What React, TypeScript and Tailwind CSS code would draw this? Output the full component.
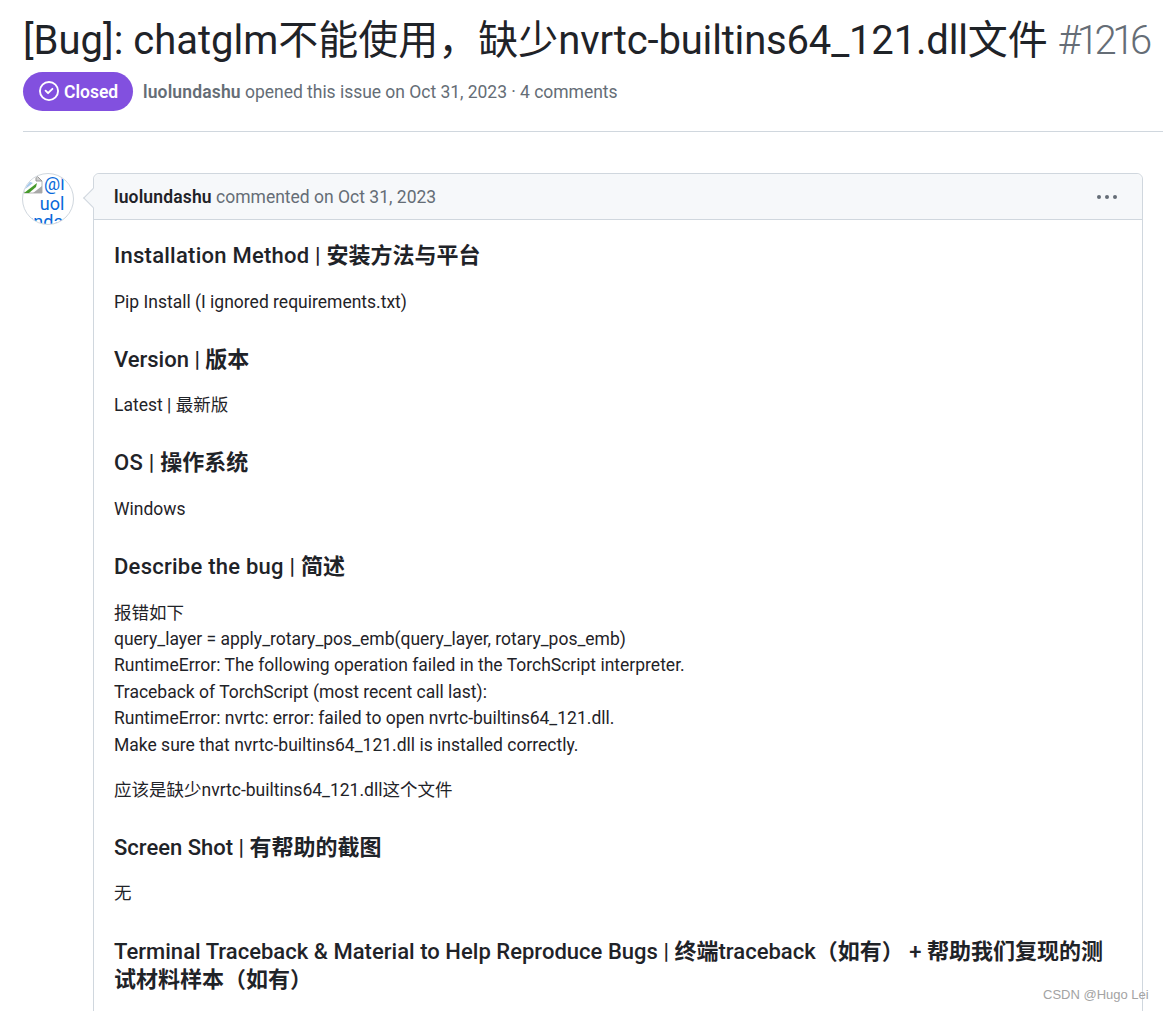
import React from "react";

const CJK = "font-['Roboto','Noto_Sans_CJK_SC',sans-serif]";

function H({ children, className = "tracking-[0.25px]" }: { children: React.ReactNode; className?: string }) {
  return <h3 className={`m-0 text-[22px] leading-[28px] font-medium text-[#1f2328] ${className}`}>{children}</h3>;
}
function Z({ children }: { children: React.ReactNode }) {
  return <span className="font-bold tracking-normal">{children}</span>;
}
function P({ children, className = "" }: { children: React.ReactNode; className?: string }) {
  return <p className={`m-0 text-[17.5px] leading-[26.4px] text-[#1f2328] ${className}`}>{children}</p>;
}

export default function App() {
  return (
    <div className={`relative w-[1163px] h-[1011px] overflow-hidden bg-white ${CJK}`}>
      <div className="pl-[23px]">
        <h1 className="m-0 pt-[16px] h-[72px] text-[40px] leading-[50px] font-normal text-[#1f2328] whitespace-nowrap">
          [Bug]: chatglm不能使用，缺少<span className="tracking-[-0.17px]">nvrtc-builtins64_121.dll</span>文件{" "}
          <span className="text-[#656d76] font-light tracking-[-4.4px]">#1216</span>
        </h1>
        <div className="flex items-center h-[39px]">
          <span className="flex items-center h-[39px] w-[110px] rounded-[20px] bg-[#8250df] pl-[16px] text-white text-[17.5px] font-semibold">
            <svg width="20" height="20" viewBox="0 0 16 16" fill="currentColor" className="mr-[5px] -mt-[2px]">
              <path d="M11.28 6.78a.75.75 0 0 0-1.06-1.06L7.25 8.69 5.78 7.22a.75.75 0 0 0-1.06 1.06l2 2a.75.75 0 0 0 1.06 0l3.5-3.5Z" />
              <path d="M16 8A8 8 0 1 1 0 8a8 8 0 0 1 16 0Zm-1.5 0a6.5 6.5 0 1 0-13 0 6.5 6.5 0 0 0 13 0Z" />
            </svg>
            <span className="pt-[1px]">Closed</span>
          </span>
          <span className="ml-[10px] pt-[1px] text-[17.5px] text-[#656d76] tracking-[-0.03px]">
            <span className="font-semibold tracking-[0.15px]">luolundashu</span> opened this issue on Oct 31, 2023 · 4 comments
          </span>
        </div>
        <div className="mt-[20px] h-px bg-[#d0d7de]" />
        <div className="flex mt-[41px]">
          <div className="w-[52px] h-[52px] -ml-px shrink-0 rounded-full border border-[#d0d7de] overflow-hidden relative text-center text-[#0969da] text-[18px] leading-[20px]">
            <svg width="20" height="20" viewBox="0 0 20 20" className="absolute left-[0px] top-[0px]">
              <path d="M1 1h12l6 6v12H1z" fill="#fff" stroke="#b4b4b4" />
              <path d="M13 1v6h6z" fill="#cfcfcf" stroke="#999999" />
              <path d="M1 11l4-4 5 2-9 7z" fill="#a9c9ea" />
              <path d="M1 19 14 9l-1 4-7 6z" fill="#469a2c" />
              <path d="M10 19l9-7v7z" fill="#a8a8a8" />
            </svg>
            <div className="pl-[21px] text-left">@l</div>
            <div className="pl-[8px]">uol</div>
            <div className="whitespace-nowrap -mt-[2px]">undas</div>
          </div>
          <div className="ml-[19px] w-[1050px] border border-[#d0d7de] rounded-t-[6px] relative">
            <div className="absolute left-[-8px] top-[17px] w-[14px] h-[14px] rotate-45 bg-[#f6f8fa] border-l border-b border-[#d0d7de]" />
            <div className="relative flex items-center justify-between h-[46px] bg-[#f6f8fa] border-b border-[#d0d7de] rounded-t-[6px] pl-[20px] pr-[24px] text-[17.5px] text-[#656d76]">
              <span className="pt-[2px]">
                <span className="font-semibold text-[#1f2328] tracking-[0.15px]">luolundashu</span> commented on Oct 31, 2023
              </span>
              <svg width="22" height="6" viewBox="0 0 22 6" fill="#656d76">
                <circle cx="3" cy="3" r="2" />
                <circle cx="11" cy="3" r="2" />
                <circle cx="19" cy="3" r="2" />
              </svg>
            </div>
            <div className="pl-[20px] pr-[24px] pt-[22px] pb-[60px]">
              <H>Installation Method | <Z>安装方法与平台</Z></H>
              <P className="mt-[19px]">Pip Install (I ignored requirements.txt)</P>
              <H className="mt-[30.3px] tracking-normal">Version | <Z>版本</Z></H>
              <P className="mt-[18.6px]">Latest | 最新版</P>
              <H className="mt-[30.6px] tracking-[0.25px]">OS | <Z>操作系统</Z></H>
              <P className="mt-[19px]">Windows</P>
              <H className="mt-[30.3px] tracking-[0.25px]">Describe the bug | <Z>简述</Z></H>
              <P className="mt-[18.6px]">
                报错如下<br />
                query_layer = apply_rotary_pos_emb(query_layer, rotary_pos_emb)<br />
                RuntimeError: The following operation failed in the TorchScript interpreter.<br />
                Traceback of TorchScript (most recent call last):<br />
                RuntimeError: nvrtc: error: failed to open nvrtc-builtins64_121.dll.<br />
                Make sure that nvrtc-builtins64_121.dll is installed correctly.
              </P>
              <P className="mt-[18.6px]">应该是缺少nvrtc-builtins64_121.dll这个文件</P>
              <H className="mt-[31.4px] tracking-normal">Screen Shot | <Z>有帮助的截图</Z></H>
              <P className="mt-[18px]">无</P>
              <H className="mt-[31px] tracking-[0.03px]">Terminal Traceback &amp; Material to Help Reproduce Bugs | <Z>终端</Z>traceback<Z>（如有）</Z> + <Z>帮助我们复现的测试材料样本（如有）</Z></H>
            </div>
          </div>
        </div>
      </div>
      <div className="absolute left-[1043px] top-[986px] text-[13px] leading-[17px] text-[#a3a3a3] font-['Liberation_Sans',sans-serif]">CSDN @Hugo Lei</div>
    </div>
  );
}
